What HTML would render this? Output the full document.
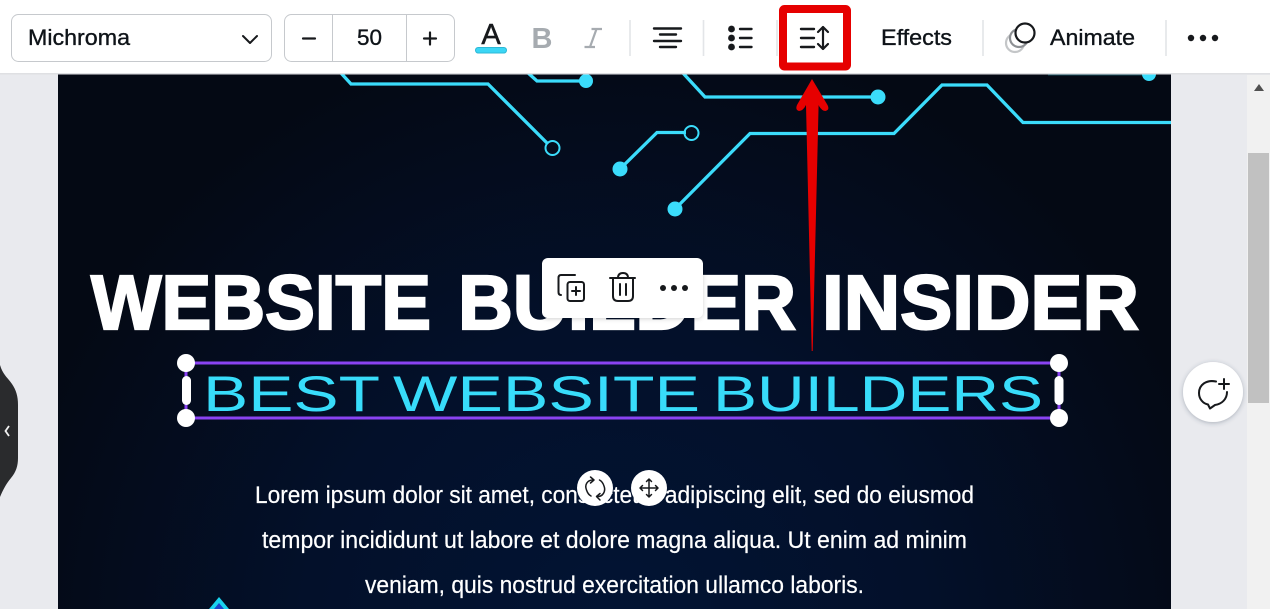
<!DOCTYPE html>
<html><head><meta charset="utf-8"><style>
html,body{margin:0;padding:0;width:1270px;height:609px;overflow:hidden;background:#e9eaee}
svg{display:block}
text{font-family:"Liberation Sans",sans-serif}
</style></head><body>
<svg width="1270" height="609" viewBox="0 0 1270 609" xmlns="http://www.w3.org/2000/svg">
<defs>
<radialGradient id="bg" gradientUnits="userSpaceOnUse" cx="614" cy="640" r="620">
<stop offset="0" stop-color="#021434"/><stop offset=".5" stop-color="#03102a"/><stop offset="1" stop-color="#040914"/>
</radialGradient>
<filter id="sh" x="-30%" y="-30%" width="160%" height="160%"><feDropShadow dx="0" dy="1" stdDeviation="2.5" flood-color="#39425a" flood-opacity=".35"/></filter>
<filter id="sh2" x="-10%" y="-10%" width="120%" height="130%"><feDropShadow dx="0" dy="1" stdDeviation="2" flood-color="#000" flood-opacity=".18"/></filter>
</defs>
<rect width="1270" height="609" fill="#e9eaee"/>
<!-- canvas -->
<rect x="58" y="74" width="1113" height="535" fill="url(#bg)"/>
<!-- circuit -->
<g fill="none" stroke="#3bdcfb" stroke-width="3.300">
<path d="M340 72 L351 84 H488 L548 144"/>
<path d="M527 72 L537 81 H586"/>
<path d="M682 72 L705 97 H878"/>
<path d="M675 209 L750 133.500 H894 L942 85 H987 L1023 122.500 H1171"/>
<path d="M620 169 L657 132.500 H686"/>
<circle cx="552.500" cy="148" r="7" stroke-width="2"/>
<circle cx="691.500" cy="133" r="7" stroke-width="2"/>
<path d="M1048 75 H1149" stroke="#134a58" stroke-width="1"/>
</g>
<g fill="#3bdcfb">
<circle cx="586" cy="81" r="7"/><circle cx="878" cy="97" r="7.500"/><circle cx="620" cy="169" r="7.500"/><circle cx="675" cy="209" r="7.500"/><circle cx="1149" cy="74" r="7"/>
</g>
<!-- logo tip -->
<path d="M219 597 L229 609 H209Z" fill="#19d3ee"/>
<path d="M219 603 L224 609 H214Z" fill="#1d45c8"/>
<!-- left handle -->
<path d="M0 365 C3 375 8 378 12 384 C16 390 18 396 18 405 V458 C18 466 16 472 11 478 C6 484 3 490 0 497Z" fill="#2a2b2d"/>
<path d="M9 426 L5.500 431 L9 436" fill="none" stroke="#f2f2f2" stroke-width="1.800"/>
<!-- title -->
<g font-size="77" font-weight="700" fill="#fff" stroke="#fff" stroke-width="2.200">
<text x="91" y="329" textLength="340" lengthAdjust="spacingAndGlyphs">WEBSITE</text>
<text x="458" y="329" textLength="338" lengthAdjust="spacingAndGlyphs">BUILDER</text>
<text x="822" y="329" textLength="317" lengthAdjust="spacingAndGlyphs">INSIDER</text>
</g>
<!-- subtitle -->
<g font-size="50" fill="#38dcfa">
<text x="203" y="411" textLength="177" lengthAdjust="spacingAndGlyphs">BEST</text>
<text x="393" y="411" textLength="307" lengthAdjust="spacingAndGlyphs">WEBSITE</text>
<text x="713" y="411" textLength="330" lengthAdjust="spacingAndGlyphs">BUILDERS</text>
</g>
<!-- paragraph -->
<g fill="#fff" font-size="24" stroke="#fff" stroke-width=".2">
<text x="255" y="503" textLength="719" lengthAdjust="spacingAndGlyphs">Lorem ipsum dolor sit amet, consectetur adipiscing elit, sed do eiusmod</text>
<text x="262" y="548" textLength="705" lengthAdjust="spacingAndGlyphs">tempor incididunt ut labore et dolore magna aliqua. Ut enim ad minim</text>
<text x="365" y="593" textLength="499" lengthAdjust="spacingAndGlyphs">veniam, quis nostrud exercitation ullamco laboris.</text>
</g>
<!-- selection -->
<g>
<path d="M186 363 H1059 M186 418 H1059" stroke="#8a43f2" stroke-width="3"/>
<path d="M186 363 V418 M1059 363 V418" stroke="#8a43f2" stroke-width="3"/>
<g fill="#fff">
<circle cx="186" cy="363" r="9"/><circle cx="1059" cy="363" r="9"/><circle cx="186" cy="418" r="9"/><circle cx="1059" cy="418" r="9"/>
<rect x="182" y="376" width="9" height="29" rx="4.500"/><rect x="1054.500" y="376" width="9" height="29" rx="4.500"/>
</g>
</g>
<!-- rotate / move -->
<circle cx="595" cy="488" r="18" fill="#fff"/><circle cx="649" cy="488" r="18" fill="#fff"/>
<g fill="none" stroke="#17191c" stroke-width="1.500" stroke-linecap="round" stroke-linejoin="round">
<path d="M593 480 C587 480 584.500 485 586.500 490 C587.500 493 589 495 591 496"/><path d="M590.500 477 L594 480 L590.500 483"/>
<path d="M597 496.500 C603 497 606 491 604 486 C603 483 601.500 481 599.500 480"/><path d="M600 500 L596.500 496.500 L600 493.500"/>
<path d="M649 479 V497 M640 488 H658 M646.500 481.500 L649 479 L651.500 481.500 M646.500 494.500 L649 497 L651.500 494.500 M642.500 485.500 L640 488 L642.500 490.500 M655.500 485.500 L658 488 L655.500 490.500"/>
</g>
<!-- red arrow -->
<path d="M812 79 L827.500 105 Q830 110 825.500 111 Q822 111 819 106 L818.600 105 L812.700 351 H811.700 L806 105 Q803 111 799 111 Q795 110 797 105Z" fill="#e60000"/>
<!-- floating menu -->
<rect x="542" y="258" width="161" height="60" rx="6" fill="#fff" filter="url(#sh2)"/>
<g fill="none" stroke="#17191c" stroke-width="2" stroke-linecap="round" stroke-linejoin="round">
<path d="M575 275 H561 Q558.500 275 558.500 278 V292 Q558.500 295 561 295"/>
<rect x="567.500" y="282" width="16.500" height="19" rx="2.500"/>
<path d="M576 287 V295 M572 291 H580"/>
<path d="M610 278 H635 M618 278 Q618 273 623 273 Q628 273 628 278"/>
<path d="M613 278 V296 Q613 301 618 301 H628 Q633 301 633 296 V278"/>
<path d="M620 284 V295 M626 284 V295"/>
</g>
<g fill="#17191c"><circle cx="663" cy="288" r="3"/><circle cx="674" cy="288" r="3"/><circle cx="685" cy="288" r="3"/></g>
<!-- toolbar -->
<rect x="0" y="0" width="1270" height="74" fill="#fff"/>
<rect x="0" y="73" width="1270" height="1.500" fill="#dfe0e3"/>
<g fill="none" stroke="#c6c9cd" stroke-width="1">
<rect x="11.500" y="14.500" width="260" height="47" rx="7"/>
<rect x="284.500" y="14.500" width="170" height="47" rx="7"/>
<path d="M332.500 15 V61 M406.500 15 V61"/>
</g>
<g fill="#0e1318" stroke="#0e1318" stroke-width=".35">
<text x="28" y="45" font-size="22" textLength="102" lengthAdjust="spacingAndGlyphs">Michroma</text>
<text x="357" y="45" font-size="22" textLength="25" lengthAdjust="spacingAndGlyphs">50</text>
<text x="881" y="45" font-size="22" textLength="71" lengthAdjust="spacingAndGlyphs">Effects</text>
<text x="1050" y="45" font-size="22" textLength="85" lengthAdjust="spacingAndGlyphs">Animate</text>
</g>
<path d="M243 36 L250 43 L257 36" fill="none" stroke="#17191c" stroke-width="2" stroke-linecap="round" stroke-linejoin="round"/>
<path d="M303 38.500 H315 M424 38.500 H436 M430 32.500 V44.500" stroke="#17191c" stroke-width="2.200" stroke-linecap="round"/>
<!-- A B I -->
<text x="491" y="44" font-size="29" fill="#17191c" stroke="#17191c" stroke-width=".5" text-anchor="middle">A</text>
<rect x="475.500" y="47.500" width="31" height="5.500" rx="2.700" fill="#3bd6f5" stroke="#2db8d6" stroke-width="1"/>
<text x="542" y="48" font-size="29" font-weight="700" fill="#a6abb0" text-anchor="middle">B</text>
<path d="M584.500 47 H595 M590 47 L596.500 29 M591.500 29 H602" fill="none" stroke="#a6abb0" stroke-width="2.200"/>
<!-- dividers -->
<path d="M630 20 V56 M703.500 20 V56 M777 20 V56 M983 20 V56 M1166 20 V56" stroke="#e3e5e8" stroke-width="1.600"/>
<!-- align -->
<path d="M654 28.500 H681 M660 34.500 H676 M654 41 H681 M660 47 H676" stroke="#17191c" stroke-width="2.400" stroke-linecap="round"/>
<!-- list -->
<g fill="#17191c"><circle cx="731.500" cy="29" r="3.400"/><circle cx="731.500" cy="38" r="3.400"/><circle cx="731.500" cy="47" r="3.400"/></g>
<path d="M740 29 H751.500 M740 38 H751.500 M740 47 H751.500" stroke="#17191c" stroke-width="2.400" stroke-linecap="round"/>
<!-- spacing -->
<path d="M801 29 H814 M801 38 H814 M801 47 H814" stroke="#17191c" stroke-width="2.400" stroke-linecap="round"/>
<path d="M823 27 V49 M818 32 L823 27 L828 32 M818 44 L823 49 L828 44" fill="none" stroke="#17191c" stroke-width="2.200" stroke-linecap="round" stroke-linejoin="round"/>
<!-- red box -->
<rect x="783" y="9" width="64" height="57.500" rx="1.500" fill="none" stroke="#e60000" stroke-width="8"/>
<!-- animate icon -->
<g fill="none" stroke-width="2.200">
<circle cx="1015" cy="43" r="9" stroke="#c4c6c8"/>
<circle cx="1019" cy="38" r="9" fill="#fff" stroke="#8d9094"/>
<circle cx="1025" cy="33" r="9.500" fill="#fff" stroke="#17191c"/>
</g>
<g fill="#17191c"><circle cx="1191" cy="38" r="3.200"/><circle cx="1203" cy="38" r="3.200"/><circle cx="1215" cy="38" r="3.200"/></g>
<!-- scrollbar -->
<rect x="1247" y="75" width="23" height="534" fill="#f1f1f1"/>
<rect x="1248" y="153" width="21" height="250" fill="#c1c1c1"/>
<path d="M1259 84 L1264 91 H1254Z" fill="#505050"/>
<!-- comment button -->
<circle cx="1213" cy="392" r="30" fill="#fff" filter="url(#sh)"/>
<g fill="none" stroke="#17191c" stroke-width="2" stroke-linecap="round" stroke-linejoin="round">
<path d="M1216 381.500 C1206 379.500 1199 385 1199 393 C1199 399 1203 403.500 1208 404.500 L1210 408.500 L1215 405 C1222 404 1227 399 1227 392"/>
<path d="M1224 379 V389 M1219 384 H1229"/>
</g>
</svg>
</body></html>
